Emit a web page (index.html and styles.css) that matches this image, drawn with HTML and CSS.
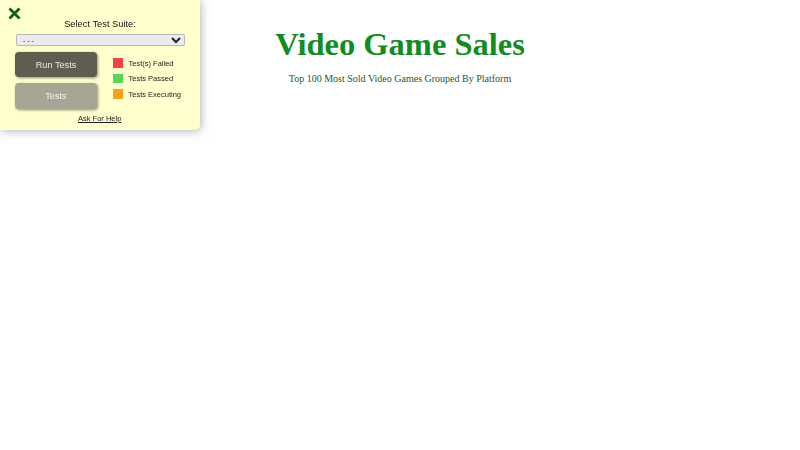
FILE: index.html
```html
<!DOCTYPE html>
<html>
<head>
<meta charset="utf-8">
<title>Video Game Sales</title>
<link rel="stylesheet" href="styles.css">
</head>
<body>
<main class="page">
  <h1 class="title">Video Game Sales</h1>
  <p class="subtitle">Top 100 Most Sold Video Games Grouped By Platform</p>
</main>

<aside class="test-panel">
  <button class="close-btn" aria-label="Close">
    <svg viewBox="0 0 13 13" width="13" height="13">
      <path d="M1.5 1.5 L11.5 11.5 M11.5 1.5 L1.5 11.5" stroke="#16591c" stroke-width="2.8" stroke-linecap="butt" fill="none"/>
    </svg>
  </button>
  <label class="suite-label" for="suite">Select Test Suite:</label>
  <select id="suite" class="suite-select">
    <option>- - -</option>
  </select>
  <div class="controls">
    <div class="buttons">
      <button class="btn btn-run">Run Tests</button>
      <button class="btn btn-tests">Tests</button>
    </div>
    <ul class="legend">
      <li class="legend-item"><span class="swatch swatch-failed"></span>Test(s) Failed</li>
      <li class="legend-item"><span class="swatch swatch-passed"></span>Tests Passed</li>
      <li class="legend-item"><span class="swatch swatch-executing"></span>Tests Executing</li>
    </ul>
  </div>
  <a class="help-link" href="#">Ask For Help</a>
</aside>
</body>
</html>
```

FILE: styles.css
```css
html, body {
  margin: 0;
  padding: 0;
  background: #ffffff;
}

.page {
  text-align: center;
  font-family: "Liberation Serif", "Times New Roman", serif;
  padding-top: 26px;
}

.title {
  margin: 0;
  font-size: 32.5px;
  line-height: 37px;
  font-weight: bold;
  color: #128c22;
}

.subtitle {
  margin: 10px 0 0;
  font-size: 10px;
  line-height: 12px;
  color: #1a5a2a;
}

.test-panel {
  position: fixed;
  top: 0;
  left: 0;
  width: 200px;
  height: 130px;
  box-sizing: border-box;
  padding: 19px 0 0 15px;
  background: #ffffcd;
  border-radius: 0 0 5px 0;
  box-shadow: 1px 1px 10px rgba(128, 128, 128, 0.6);
  font-family: "Liberation Sans", Arial, sans-serif;
  display: flex;
  flex-direction: column;
  align-items: flex-start;
}

.close-btn {
  position: absolute;
  top: 7px;
  left: 8px;
  width: 13px;
  height: 13px;
  padding: 0;
  margin: 0;
  border: 0;
  background: none;
  display: block;
}

.close-btn svg {
  display: block;
}

.suite-label {
  display: block;
  width: 170px;
  text-align: center;
  font-size: 9.3px;
  line-height: 11px;
  color: #111;
}

.suite-select {
  margin: 4px 0 0 1px;
  width: 169px;
  height: 12px;
  padding: 0 2px;
  font-family: "Liberation Sans", Arial, sans-serif;
  font-size: 7px;
  color: #222;
  background-color: #ebebeb;
  border: 1px solid #b8b8b8;
  border-radius: 2px;
  box-sizing: border-box;
}

.controls {
  display: flex;
  margin-top: 6px;
}

.buttons {
  display: flex;
  flex-direction: column;
  gap: 6px;
}

.btn {
  width: 82px;
  height: 25px;
  margin: 0;
  padding: 0;
  border: 0;
  border-radius: 4px;
  font-family: "Liberation Sans", Arial, sans-serif;
  font-size: 9.2px;
  box-shadow: 1px 1px 3px rgba(0, 0, 0, 0.45);
}

.btn-run {
  background: #5f5c50;
  color: #eceae0;
}

.btn-tests {
  height: 26px;
  background: #a7a596;
  color: #f2f2ec;
}

.legend {
  list-style: none;
  margin: 6px 0 0 16px;
  padding: 0;
  display: flex;
  flex-direction: column;
  gap: 5.5px;
}

.legend-item {
  display: flex;
  align-items: center;
  height: 10px;
  font-size: 7.5px;
  color: #222;
}

.swatch {
  width: 10px;
  height: 9.5px;
  margin-right: 5.5px;
  flex: none;
}

.swatch-failed { background: #f24444; }
.swatch-passed { background: #5cd55c; }
.swatch-executing { background: #f5a11e; }

.help-link {
  align-self: flex-start;
  margin: 5px 0 0 63px;
  font-size: 7.5px;
  line-height: 9px;
  color: #222;
  text-decoration: underline;
}
```
